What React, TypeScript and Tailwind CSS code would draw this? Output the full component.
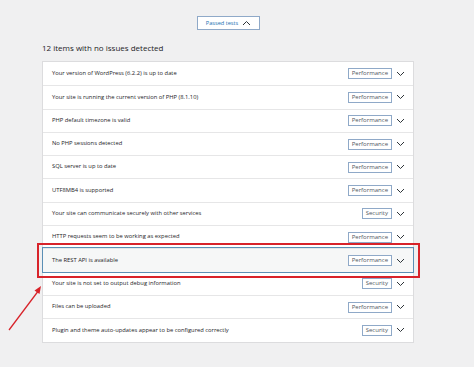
import React from 'react';

const ITEMS: { label: string; tag: string }[] = [
  { label: 'Your version of WordPress (6.2.2) is up to date', tag: 'Performance' },
  { label: 'Your site is running the current version of PHP (8.1.10)', tag: 'Performance' },
  { label: 'PHP default timezone is valid', tag: 'Performance' },
  { label: 'No PHP sessions detected', tag: 'Performance' },
  { label: 'SQL server is up to date', tag: 'Performance' },
  { label: 'UTF8MB4 is supported', tag: 'Performance' },
  { label: 'Your site can communicate securely with other services', tag: 'Security' },
  { label: 'HTTP requests seem to be working as expected', tag: 'Performance' },
  { label: 'The REST API is available', tag: 'Performance' },
  { label: 'Your site is not set to output debug information', tag: 'Security' },
  { label: 'Files can be uploaded', tag: 'Performance' },
  { label: 'Plugin and theme auto-updates appear to be configured correctly', tag: 'Security' },
];

const Chevron = ({ up }: { up?: boolean }) => (
  <svg width="9" height="6" viewBox="0 0 9 6" className="text-[#2c3338]">
    <path
      d={up ? 'M1 5 L4.5 1.5 L8 5' : 'M1 1 L4.5 4.5 L8 1'}
      fill="none"
      stroke="currentColor"
      strokeWidth="1"
    />
  </svg>
);

export default function App() {
  return (
    <div
      className="relative w-[474px] h-[367px] bg-[#f0f0f1] overflow-hidden text-[#1d2327]"
      style={{ fontFamily: '"Open Sans", "Noto Sans", sans-serif' }}
    >
      <div className="flex justify-center pt-[16px]">
        <button className="ml-[-17px] flex items-center gap-[4px] h-[14px] px-[8px] bg-white border border-[#8fa9c8] text-[5.6px] text-[#2271b1]">
          Passed tests
          <Chevron up />
        </button>
      </div>

      <div className="pl-[42px] pt-[12px] text-[8px] leading-[12px]">12 items with no issues detected</div>

      <div className="ml-[42px] mt-[7px] w-[372px] bg-white border border-[#dcdcde]">
        {ITEMS.map((item, i) => {
          const active = item.label === 'The REST API is available';
          return (
            <div
              key={item.label}
              className={
                'relative flex items-center h-[23.3px] pl-[9px] pr-[7px] ' +
                (i > 0 ? 'border-t border-[#e6e6e7] ' : '') +
                (active ? 'bg-[#f6f7f7] outline outline-[1.5px] outline-[#5b8fb5] z-10' : '')
              }
            >
              <span className="flex-1 text-[5.8px] leading-none">{item.label}</span>
              <span className="px-[3px] h-[11px] flex items-center border border-[#8fa9c8] text-[6px] text-[#50575e] bg-white">
                {item.tag}
              </span>
              <span className="ml-[3px] w-[11px] flex justify-center">
                <Chevron />
              </span>
              {active && (
                <div className="absolute left-[-6px] right-[-7px] top-[-6px] bottom-[-6px] border-[2px] border-[#d8232a] pointer-events-none" />
              )}
            </div>
          );
        })}
      </div>

      <svg className="absolute left-0 top-0 pointer-events-none" width="474" height="367">
        <line x1="9" y1="330" x2="39" y2="290" stroke="#d8232a" strokeWidth="1.3" />
        <path d="M41 286 L34.5 290.5 L39.5 294 Z" fill="#d8232a" />
      </svg>
    </div>
  );
}
